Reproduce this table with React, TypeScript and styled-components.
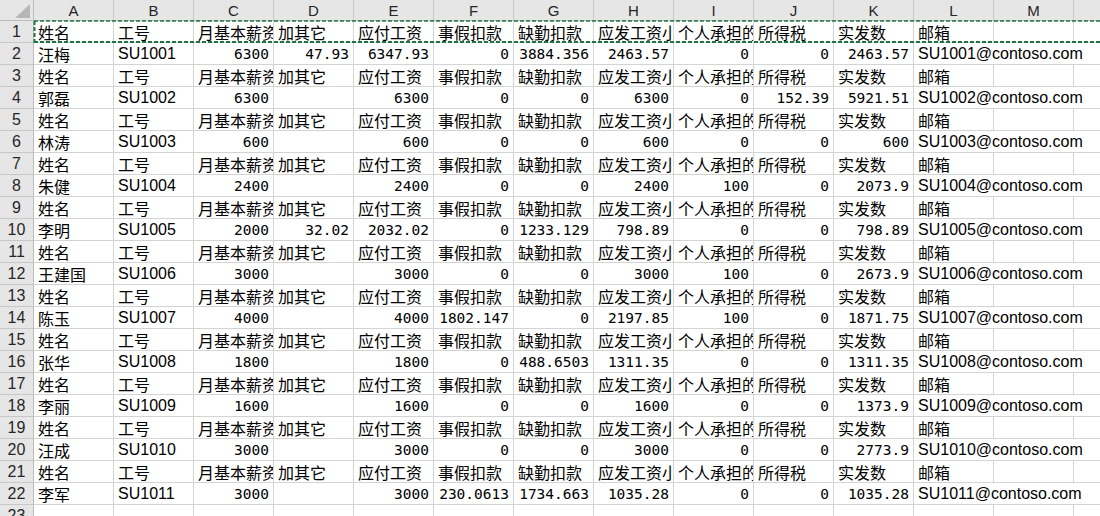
import React from "react";
import styled, { createGlobalStyle } from "styled-components";

const Global = createGlobalStyle`
  html, body { margin: 0; padding: 0; background: #ffffff; overflow: hidden; }
  #root { width: 1100px; height: 516px; overflow: hidden; }
`;

const ROW_HEAD_W = 34;
const COL_W = 80;
const COLS = ["A", "B", "C", "D", "E", "F", "G", "H", "I", "J", "K", "L", "M", "N"];

const Frame = styled.div`
  position: relative;
  width: 1100px;
  height: 516px;
  overflow: hidden;
`;

const Sheet = styled.div`
  display: grid;
  grid-template-columns: ${ROW_HEAD_W}px repeat(${COLS.length}, ${COL_W}px);
  grid-template-rows: 21px;
  grid-auto-rows: 22px;
  width: max-content;
`;

const Corner = styled.div`
  box-sizing: border-box;
  background: #e6e6e6;
  border-right: 1px solid #bcbcbc;
  border-bottom: 1px solid #bcbcbc;
  display: flex;
  align-items: flex-end;
  justify-content: flex-end;
  padding: 0 3px 2px 0;
`;

const ColHead = styled.div`
  box-sizing: border-box;
  background: #e6e6e6;
  border-right: 1px solid #c8c8c8;
  border-bottom: 1px solid #bcbcbc;
  display: flex;
  align-items: center;
  justify-content: center;
  font-family: "Liberation Sans", Arial, sans-serif;
  font-size: 15px;
  color: #262626;
  padding-top: 1px;
`;

const RowHead = styled.div`
  box-sizing: border-box;
  background: #e6e6e6;
  border-right: 1px solid #bcbcbc;
  border-bottom: 1px solid #c8c8c8;
  display: flex;
  align-items: center;
  justify-content: center;
  font-family: "Liberation Sans", Arial, sans-serif;
  font-size: 16px;
  color: #262626;
  padding-top: 1px;
`;

type Kind = "cjk" | "latin" | "num" | "empty";

const fontFor = (k: Kind) => {
  if (k === "num") return `"DejaVu Sans Mono", "Liberation Mono", monospace`;
  if (k === "latin") return `"Liberation Sans", Arial, sans-serif`;
  return `"Noto Sans CJK SC", "Noto Sans", sans-serif`;
};

const Cell = styled.div<{ $kind: Kind; $span?: number }>`
  box-sizing: border-box;
  grid-column: span ${(p) => p.$span ?? 1};
  border-right: 1px solid #d4d4d4;
  border-bottom: 1px solid #d4d4d4;
  display: flex;
  align-items: center;
  justify-content: ${(p) => (p.$kind === "num" ? "flex-end" : "flex-start")};
  padding: ${(p) => (p.$kind === "num" ? "1px 4px 0 0" : "1px 0 0 4px")};
  overflow: hidden;
  white-space: nowrap;
  text-overflow: clip;
  font-family: ${(p) => fontFor(p.$kind)};
  font-size: ${(p) => (p.$kind === "num" ? "14.5px" : "16px")};
  line-height: 20px;
  color: #000000;
`;

const Marquee = styled.svg`
  position: absolute;
  left: 33px;
  top: 20px;
  overflow: visible;
  pointer-events: none;
`;

const HEADERS = [
  "姓名",
  "工号",
  "月基本薪资",
  "加其它",
  "应付工资",
  "事假扣款",
  "缺勤扣款",
  "应发工资小计",
  "个人承担的部分",
  "所得税",
  "实发数",
  "邮箱",
];

type Emp = [string, string, string, string, string, string, string, string, string, string, string];

const DATA: Emp[] = [
  ["汪梅", "SU1001", "6300", "47.93", "6347.93", "0", "3884.356", "2463.57", "0", "0", "2463.57"],
  ["郭磊", "SU1002", "6300", "", "6300", "0", "0", "6300", "0", "152.39", "5921.51"],
  ["林涛", "SU1003", "600", "", "600", "0", "0", "600", "0", "0", "600"],
  ["朱健", "SU1004", "2400", "", "2400", "0", "0", "2400", "100", "0", "2073.9"],
  ["李明", "SU1005", "2000", "32.02", "2032.02", "0", "1233.129", "798.89", "0", "0", "798.89"],
  ["王建国", "SU1006", "3000", "", "3000", "0", "0", "3000", "100", "0", "2673.9"],
  ["陈玉", "SU1007", "4000", "", "4000", "1802.147", "0", "2197.85", "100", "0", "1871.75"],
  ["张华", "SU1008", "1800", "", "1800", "0", "488.6503", "1311.35", "0", "0", "1311.35"],
  ["李丽", "SU1009", "1600", "", "1600", "0", "0", "1600", "0", "0", "1373.9"],
  ["汪成", "SU1010", "3000", "", "3000", "0", "0", "3000", "0", "0", "2773.9"],
  ["李军", "SU1011", "3000", "", "3000", "230.0613", "1734.663", "1035.28", "0", "0", "1035.28"],
];

const HeaderRow: React.FC<{ n: number }> = ({ n }) => (
  <>
    <RowHead>{n}</RowHead>
    {HEADERS.map((h, i) => (
      <Cell key={i} $kind="cjk">
        {h}
      </Cell>
    ))}
    <Cell $kind="empty" />
    <Cell $kind="empty" />
  </>
);

const DataRow: React.FC<{ n: number; emp: Emp }> = ({ n, emp }) => (
  <>
    <RowHead>{n}</RowHead>
    <Cell $kind="cjk">{emp[0]}</Cell>
    <Cell $kind="latin">{emp[1]}</Cell>
    {emp.slice(2).map((v, i) => (
      <Cell key={i} $kind={v ? "num" : "empty"}>
        {v}
      </Cell>
    ))}
    <Cell $kind="latin" $span={3}>
      {emp[1]}@contoso.com
    </Cell>
  </>
);

const EmptyRow: React.FC<{ n: number }> = ({ n }) => (
  <>
    <RowHead>{n}</RowHead>
    {COLS.map((c) => (
      <Cell key={c} $kind="empty" />
    ))}
  </>
);

export default function App() {
  const rows: React.ReactNode[] = [];
  DATA.forEach((emp, i) => {
    rows.push(<HeaderRow key={`h${i}`} n={i * 2 + 1} />);
    rows.push(<DataRow key={`d${i}`} n={i * 2 + 2} emp={emp} />);
  });
  rows.push(<EmptyRow key="e" n={23} />);

  return (
    <Frame>
      <Global />
      <Sheet>
        <Corner>
          <svg width="15" height="14" viewBox="0 0 15 14">
            <polygon points="15,0 15,14 0,14" fill="#b6b6b6" />
          </svg>
        </Corner>
        {COLS.map((c) => (
          <ColHead key={c}>{c}</ColHead>
        ))}
        {rows}
      </Sheet>
      <Marquee width="1100" height="24">
        <line x1="1" y1="1" x2="1100" y2="1" stroke="#217346" strokeWidth="1.5" strokeDasharray="4 2" />
        <line x1="1.5" y1="1" x2="1.5" y2="23" stroke="#217346" strokeWidth="2" strokeDasharray="4 2" />
        <line x1="1" y1="22" x2="1100" y2="22" stroke="#217346" strokeWidth="2" strokeDasharray="4 2" />
      </Marquee>
    </Frame>
  );
}
